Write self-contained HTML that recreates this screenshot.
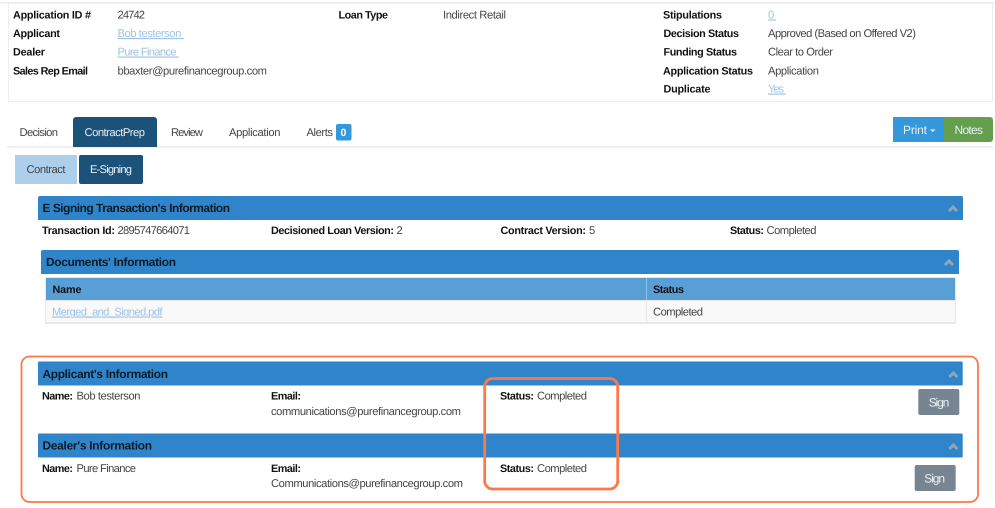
<!DOCTYPE html>
<html><head><meta charset="utf-8"><title>E-Signing</title>
<style>
html,body{margin:0;padding:0;background:#fff;width:995px;height:508px;overflow:hidden}
svg{display:block}
text{font-family:"Liberation Sans",sans-serif;font-size:11.2px;fill:#454545;text-rendering:geometricPrecision}
.b{font-weight:bold;font-size:10.8px;fill:#111}
.h{font-weight:bold;font-size:11.9px;fill:#0c1a26}
.l{fill:#9cc3e6;text-decoration:underline;white-space:pre}
.w{fill:#e8f0f6;font-size:12px}
.chev{fill:none;stroke:#8fa6b8;stroke-width:3}
</style></head><body>
<svg width="995" height="508" viewBox="0 0 995 508" xmlns="http://www.w3.org/2000/svg">
<rect x="0" y="2" width="995" height="1.5" fill="#eeeeee"/>
<rect x="8.5" y="3.5" width="984" height="98" fill="#fff" stroke="#eeeeee"/>
<g id="summary">
<text class="b" x="13" y="18.5" textLength="78" lengthAdjust="spacing">Application ID #</text>
<text class="b" x="13" y="37" textLength="47" lengthAdjust="spacing">Applicant</text>
<text class="b" x="13" y="55.5" textLength="32" lengthAdjust="spacing">Dealer</text>
<text class="b" x="13" y="74.5" textLength="75" lengthAdjust="spacing">Sales Rep Email</text>
<text x="117.5" y="18.5" textLength="27.5" lengthAdjust="spacing">24742</text>
<text class="l" x="117.5" y="37" textLength="66.5" lengthAdjust="spacing">Bob testerson </text>
<text class="l" x="117.5" y="55.5" textLength="61.5" lengthAdjust="spacing">Pure Finance </text>
<text x="117.5" y="74.5" textLength="149.5" lengthAdjust="spacing">bbaxter@purefinancegroup.com</text>
<text class="b" x="338.5" y="18.5" textLength="49.5" lengthAdjust="spacing">Loan Type</text>
<text x="443" y="18.5" textLength="63" lengthAdjust="spacing">Indirect Retail</text>
<text class="b" x="663" y="18.5" textLength="59" lengthAdjust="spacing">Stipulations</text>
<text class="b" x="663.5" y="37" textLength="75.5" lengthAdjust="spacing">Decision Status</text>
<text class="b" x="663.5" y="55.5" textLength="73.5" lengthAdjust="spacing">Funding Status</text>
<text class="b" x="663" y="74.5" textLength="90" lengthAdjust="spacing">Application Status</text>
<text class="b" x="663.5" y="92.5" textLength="47" lengthAdjust="spacing">Duplicate</text>
<text class="l" x="768" y="18.5" textLength="8" lengthAdjust="spacing">0 </text>
<text x="768" y="37" textLength="148" lengthAdjust="spacing">Approved (Based on Offered V2)</text>
<text x="768" y="55.5" textLength="65" lengthAdjust="spacing">Clear to Order</text>
<text x="768" y="74.5" textLength="51" lengthAdjust="spacing">Application</text>
<text class="l" x="768" y="92.5" textLength="18" lengthAdjust="spacing">Yes </text>
</g>
<g id="tabs">
<rect x="7" y="146" width="986" height="2" fill="#f0f0f0"/>
<path d="M73 147V120a3 3 0 0 1 3-3h78a3 3 0 0 1 3 3v27z" fill="#1c5279"/>
<text x="19.5" y="136" textLength="38.5" lengthAdjust="spacing">Decision</text>
<text x="84.5" y="136" textLength="60.5" lengthAdjust="spacing" style="fill:#e6eef4">ContractPrep</text>
<text x="171" y="136" textLength="32" lengthAdjust="spacing">Review</text>
<text x="229" y="136" textLength="51.5" lengthAdjust="spacing">Application</text>
<text x="306.5" y="136" textLength="26.5" lengthAdjust="spacing">Alerts</text>
<rect x="336" y="124" width="15.5" height="16.5" rx="2" fill="#3498db"/>
<text x="340.5" y="136" textLength="6" lengthAdjust="spacing" style="fill:#fff;font-weight:bold;font-size:10.5px">0</text>
<path d="M893 117H944V142H893z" fill="#3498db"/>
<path d="M944 117H990a3 3 0 0 1 3 3v19a3 3 0 0 1-3 3H944z" fill="#659f4d"/>
<text class="w" x="903" y="134" textLength="24" lengthAdjust="spacing">Print</text>
<path d="M930 129.5h5.5l-2.75 2.5z" fill="#e8f0f6"/>
<text class="w" x="954.5" y="134" textLength="28.5" lengthAdjust="spacing">Notes</text>
<rect x="15" y="155" width="62" height="29" fill="#aecfeb"/>
<rect x="79" y="155" width="64" height="29" rx="2" fill="#1c5279"/>
<text x="26.5" y="173" textLength="39" lengthAdjust="spacing">Contract</text>
<text x="90" y="173" textLength="42" lengthAdjust="spacing" style="fill:#e6eef4">E-Signing</text>
</g>
<g id="transaction">
<path d="M38 220V198a2 2 0 0 1 2-2H961a2 2 0 0 1 2 2V220z" fill="#3085ca"/>
<text class="h" x="42.5" y="212" textLength="187.5" lengthAdjust="spacing">E Signing Transaction's Information</text>
<path class="chev" d="M949 211l4-4 4 4"/>
<text class="b" x="42" y="234" textLength="73" lengthAdjust="spacing">Transaction Id:</text>
<text x="117.5" y="234" textLength="72.5" lengthAdjust="spacing">2895747664071</text>
<text class="b" x="271" y="234" textLength="123" lengthAdjust="spacing">Decisioned Loan Version:</text>
<text x="396.5" y="234" textLength="5.5" lengthAdjust="spacing">2</text>
<text class="b" x="500.5" y="234" textLength="85.5" lengthAdjust="spacing">Contract Version:</text>
<text x="589" y="234" textLength="5.5" lengthAdjust="spacing">5</text>
<text class="b" x="730" y="234" textLength="34" lengthAdjust="spacing">Status:</text>
<text x="766.5" y="234" textLength="50" lengthAdjust="spacing">Completed</text>
</g>
<g id="documents">
<path d="M41 274V252a2 2 0 0 1 2-2H957a2 2 0 0 1 2 2V274z" fill="#3085ca"/>
<text class="h" x="46" y="266" textLength="130" lengthAdjust="spacing">Documents' Information</text>
<path class="chev" d="M945 265l4-4 4 4"/>
<rect x="45" y="277" width="911" height="47" fill="#e8e8e8"/>
<rect x="46" y="278" width="909" height="22" fill="#589fd6"/>
<rect x="46" y="301" width="909" height="21" fill="#f9f9f9"/>
<rect x="646" y="278" width="1" height="22" fill="#8fbfe3"/>
<rect x="646" y="301" width="1" height="21" fill="#e8e8e8"/>
<text class="b" x="52.5" y="293" textLength="29" lengthAdjust="spacing">Name</text>
<text class="b" x="653" y="293" textLength="31" lengthAdjust="spacing">Status</text>
<text class="l" x="52" y="315.5" textLength="110.5" lengthAdjust="spacing">Merged_and_Signed.pdf</text>
<text x="653" y="315.5" textLength="50" lengthAdjust="spacing">Completed</text>
</g>
<g id="applicant">
<rect x="38" y="361.5" width="924.7" height="24" rx="1" fill="#3085ca"/>
<text class="h" x="42.5" y="378" textLength="125.5" lengthAdjust="spacing">Applicant's Information</text>
<path class="chev" d="M949.3 377l4-4 4 4"/>
<text class="b" x="42" y="399.5" textLength="31" lengthAdjust="spacing">Name:</text>
<text x="76.5" y="399.5" textLength="64" lengthAdjust="spacing">Bob testerson</text>
<text class="b" x="271" y="399.5" textLength="30" lengthAdjust="spacing">Email:</text>
<text x="271" y="415" textLength="190" lengthAdjust="spacing">communications@purefinancegroup.com</text>
<text class="b" x="500" y="399.5" textLength="34" lengthAdjust="spacing">Status:</text>
<text x="537" y="399.5" textLength="50" lengthAdjust="spacing">Completed</text>
<rect x="918.3" y="389" width="41" height="26" rx="2" fill="#778592"/>
<text class="w" x="928.7" y="406.5" textLength="20.6" lengthAdjust="spacing">Sign</text>
</g>
<g id="dealer">
<rect x="38" y="433.5" width="924.7" height="24" rx="1" fill="#3085ca"/>
<text class="h" x="42.5" y="449.5" textLength="109.5" lengthAdjust="spacing">Dealer's Information</text>
<path class="chev" d="M949.3 449l4-4 4 4"/>
<text class="b" x="42" y="472" textLength="31" lengthAdjust="spacing">Name:</text>
<text x="76.5" y="472" textLength="59.5" lengthAdjust="spacing">Pure Finance</text>
<text class="b" x="271" y="472" textLength="30" lengthAdjust="spacing">Email:</text>
<text x="271" y="487" textLength="192" lengthAdjust="spacing">Communications@purefinancegroup.com</text>
<text class="b" x="500" y="472" textLength="34" lengthAdjust="spacing">Status:</text>
<text x="537" y="472" textLength="50" lengthAdjust="spacing">Completed</text>
<rect x="914.7" y="465" width="41" height="26" rx="2" fill="#778592"/>
<text class="w" x="924.3" y="482.5" textLength="20.7" lengthAdjust="spacing">Sign</text>
</g>
<rect x="21.5" y="356.5" width="956.5" height="145.5" rx="8" fill="none" stroke="#ff7847" stroke-width="1.8"/>
<rect x="484.7" y="378.5" width="133" height="110.5" rx="8" fill="none" stroke="#ff7847" stroke-width="2.8"/>
</svg>
</body></html>
